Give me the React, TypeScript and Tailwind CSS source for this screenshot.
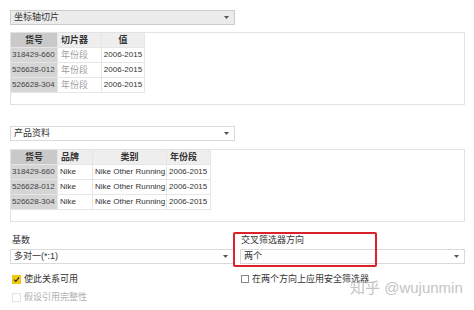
import React from "react";

const F = { fontFamily: '"Liberation Sans", "Noto Sans CJK SC", sans-serif' };

function Arrow() {
  return (
    <svg width="5" height="3" viewBox="0 0 5 3" className="shrink-0">
      <path d="M0 0 L5 0 L2.5 3 Z" fill="#555" />
    </svg>
  );
}

function Dropdown({ label, gray, w }: { label: string; gray?: boolean; w: string }) {
  return (
    <div
      className={`${w} h-[15px] border ${gray ? "bg-[#ebebeb] border-[#cccccc]" : "bg-white border-[#dadada]"} flex items-center justify-between pl-[3px] pr-[5px] text-[9px] text-[#333]`}
    >
      <span className="leading-none">{label}</span>
      <Arrow />
    </div>
  );
}

type Cell = { t: string; w: string; kind: "h0" | "h" | "k" | "g" | "v"; align?: "c" | "l" };

function Row({ cells }: { cells: Cell[] }) {
  return (
    <div className="flex h-[15px]">
      {cells.map((c, i) => {
        const base = "h-[15px] flex items-center border-r border-b border-[#e6e6e6] leading-none whitespace-nowrap overflow-hidden";
        let cls = "";
        if (c.kind === "h0") cls = "bg-[#c9c9c9] text-[#333] font-bold text-[9px] justify-center";
        else if (c.kind === "h")
          cls = `bg-[#eeeeee] text-[#333] font-bold text-[9px] ${c.align === "c" ? "justify-center" : "pl-[3px]"}`;
        else if (c.kind === "k") cls = "bg-[#d5d5d5] text-[#444] text-[8px] pl-[1px]";
        else if (c.kind === "g") cls = "bg-white text-[#a0a0a0] text-[9px] pl-[3px]";
        else cls = `bg-white text-[#333] text-[8px] ${c.align === "c" ? "justify-center" : "pl-[2px]"}`;
        return (
          <div key={i} className={`${base} ${c.w} ${cls}`}>
            {c.t}
          </div>
        );
      })}
    </div>
  );
}

export default function App() {
  const ids = ["318429-660", "526628-012", "526628-304"];
  return (
    <div className="w-[474px] h-[310px] bg-white relative overflow-hidden" style={F}>
      <div className="pt-[10px] pl-[10px] flex flex-col">
        <Dropdown label="坐标轴切片" gray w="w-[225px]" />
        <div className="mt-[7px] w-[455px] h-[73px] border border-[#e2e2e2] flex flex-col">
          <Row
            cells={[
              { t: "货号", w: "w-[47px]", kind: "h0" },
              { t: "切片器", w: "w-[44px]", kind: "h" },
              { t: "值", w: "w-[43px]", kind: "h", align: "c" },
            ]}
          />
          {ids.map((id) => (
            <Row
              key={id}
              cells={[
                { t: id, w: "w-[47px]", kind: "k" },
                { t: "年份段", w: "w-[44px]", kind: "g" },
                { t: "2006-2015", w: "w-[43px]", kind: "v", align: "c" },
              ]}
            />
          ))}
        </div>

        <div className="mt-[21px]">
          <Dropdown label="产品资料" w="w-[225px]" />
        </div>
        <div className="mt-[8px] w-[455px] h-[73px] border border-[#e2e2e2] flex flex-col">
          <Row
            cells={[
              { t: "货号", w: "w-[47px]", kind: "h0" },
              { t: "品牌", w: "w-[35px]", kind: "h" },
              { t: "类别", w: "w-[74px]", kind: "h", align: "c" },
              { t: "年份段", w: "w-[44px]", kind: "h" },
            ]}
          />
          {ids.map((id) => (
            <Row
              key={id}
              cells={[
                { t: id, w: "w-[47px]", kind: "k" },
                { t: "Nike", w: "w-[35px]", kind: "v" },
                { t: "Nike Other Running", w: "w-[74px]", kind: "v" },
                { t: "2006-2015", w: "w-[44px]", kind: "v" },
              ]}
            />
          ))}
        </div>

        <div className="mt-[10px] flex gap-[6px]">
          <div className="w-[224px] flex flex-col">
            <div className="h-[16px] flex items-center pl-[2px] text-[9px] text-[#333] leading-none">基数</div>
            <div className="mt-[1px]">
              <Dropdown label="多对一(*:1)" w="w-[224px]" />
            </div>
            <div className="mt-[10px] flex items-center gap-[3px] pl-[2px] h-[10px]">
              <div className="w-[9px] h-[9px] bg-[#f2c811] flex items-center justify-center">
                <svg width="7" height="7" viewBox="0 0 7 7">
                  <path d="M1 3.6 L2.8 5.3 L6 1.5" stroke="#333" strokeWidth="1.2" fill="none" />
                </svg>
              </div>
              <span className="text-[9px] text-[#333] leading-none">使此关系可用</span>
            </div>
            <div className="mt-[8px] flex items-center gap-[3px] pl-[2px] h-[10px]">
              <div className="w-[9px] h-[9px] border border-[#e2e2e2] bg-white" />
              <span className="text-[9px] text-[#b0b0b0] leading-none">假设引用完整性</span>
            </div>
          </div>
          <div className="w-[225px] flex flex-col">
            <div className="h-[16px] flex items-center pl-[1px] text-[9px] text-[#333] leading-none">交叉筛选器方向</div>
            <div className="mt-[1px]">
              <Dropdown label="两个" w="w-[225px]" />
            </div>
            <div className="mt-[10px] flex items-center gap-[3px] pl-[1px] h-[10px]">
              <div className="w-[8px] h-[8px] border border-[#888] bg-white" />
              <span className="text-[9px] text-[#333] leading-none">在两个方向上应用安全筛选器</span>
            </div>
          </div>
        </div>
      </div>

      <div className="absolute left-[233px] top-[232px] w-[144px] h-[35px] border-2 border-[#d9232a] rounded-[2px]" />
      <div className="absolute left-[350px] top-[280px] text-[15px] leading-none text-[#c4c4c4] whitespace-nowrap">
        知乎 @wujunmin
      </div>
    </div>
  );
}
